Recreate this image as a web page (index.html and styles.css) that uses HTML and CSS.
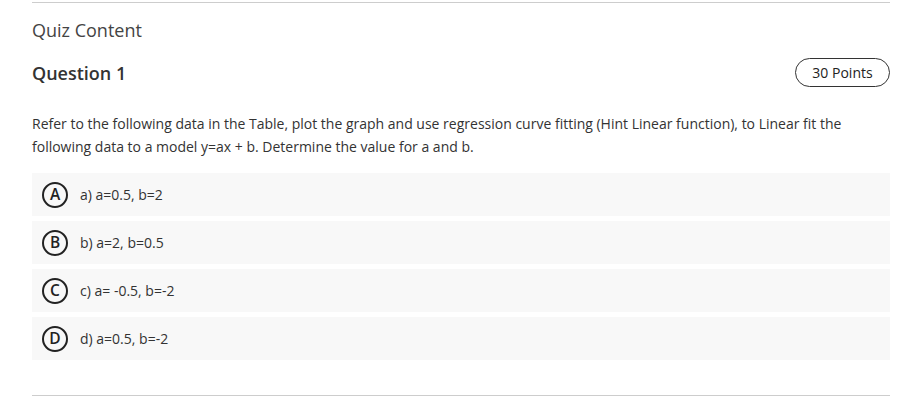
FILE: index.html
```html
<!DOCTYPE html>
<html>
<head>
<meta charset="utf-8">
<link rel="stylesheet" href="styles.css">
</head>
<body>
<div class="page">
  <div class="rule"></div>
  <h1 class="title">Quiz Content</h1>
  <div class="qhead">
    <h2 class="qname">Question 1</h2>
    <span class="points">30 Points</span>
  </div>
  <p class="prompt">Refer to the following data in the Table, plot the graph and use regression curve fitting (Hint Linear function), to Linear fit the following data to a model y=ax + b. Determine the value for a and b.</p>
  <ul class="options">
    <li class="option"><span class="letter">A</span><span class="otext">a) a=0.5, b=2</span></li>
    <li class="option"><span class="letter">B</span><span class="otext">b) a=2, b=0.5</span></li>
    <li class="option"><span class="letter">C</span><span class="otext">c) a= -0.5, b=-2</span></li>
    <li class="option"><span class="letter">D</span><span class="otext">d) a=0.5, b=-2</span></li>
  </ul>
  <div class="rule bottom"></div>
</div>
</body>
</html>
```
FILE: styles.css
```css
html, body {
  margin: 0;
  padding: 0;
  background: #fff;
}
body {
  font-family: "Open Sans", "Liberation Sans", sans-serif;
  color: #333;
}
.page {
  width: 858px;
  margin-left: 32px;
  padding-top: 2px;
}
.rule {
  border-top: 1px solid #cdcdcd;
  height: 0;
}
.title {
  margin: 15px 0 0 0;
  font-size: 18px;
  font-weight: 400;
  line-height: 24px;
  color: #444;
}
.qhead {
  display: flex;
  justify-content: space-between;
  align-items: center;
  margin-top: 16px;
}
.qname {
  margin: 0;
  font-size: 18px;
  font-weight: 600;
  line-height: 24px;
  color: #333;
}
.points {
  box-sizing: border-box;
  width: 95px;
  height: 29px;
  border: 1px solid #333;
  border-radius: 15px;
  font-size: 14px;
  line-height: 27px;
  text-align: center;
  color: #222;
}
.prompt {
  margin: 25px 0 0 0;
  font-size: 14px;
  line-height: 23px;
  color: #333;
}
.options {
  list-style: none;
  margin: 15px 0 0 0;
  padding: 0;
  display: flex;
  flex-direction: column;
  gap: 5px;
}
.option {
  display: flex;
  align-items: center;
  height: 43px;
  background: #f8f8f8;
  padding-left: 10px;
  box-sizing: border-box;
}
.letter {
  box-sizing: border-box;
  width: 26px;
  height: 26px;
  border: 2px solid #222;
  border-radius: 50%;
  display: flex;
  align-items: center;
  justify-content: center;
  font-size: 15.5px;
  line-height: 1;
  font-weight: 600;
  color: #222;
}
.otext {
  margin-left: 12px;
  font-size: 14px;
  color: #333;
}
.bottom {
  margin-top: 35px;
}
```
